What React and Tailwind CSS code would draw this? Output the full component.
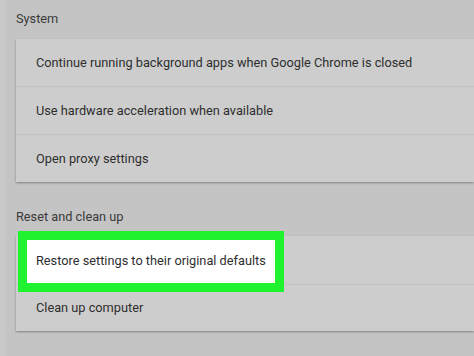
export default function App() {
  const font = { fontFamily: 'Roboto, "Noto Sans", sans-serif' };
  return (
    <div
      className="w-[474px] h-[356px] overflow-hidden bg-[#c4c4c4] text-[#2e2e2e] text-[12.75px] border-l-[5px] border-[#c9c9c9]"
      style={font}
    >
      <div className="pl-[11px]">
        <div className="h-[39px] flex items-center pb-[2px] text-[#3a3a3a]">System</div>
        <div className="bg-[#cdcdcd] shadow-[0_1px_2px_rgba(0,0,0,0.35)]">
          <div className="h-[47px] flex items-center pl-5">
            Continue running background apps when Google Chrome is closed
          </div>
          <div className="h-[48px] flex items-center pl-5 border-t border-[#c2c2c2]">
            Use hardware acceleration when available
          </div>
          <div className="h-[48px] flex items-center pl-5 border-t border-[#c2c2c2]">
            Open proxy settings
          </div>
        </div>
        <div className="h-[54px] flex items-end pb-[10px] text-[#3a3a3a]">Reset and clean up</div>
        <div className="bg-[#cdcdcd] shadow-[0_1px_2px_rgba(0,0,0,0.35)]">
          <div className="relative h-[48px] flex items-center pl-5">
            <div className="absolute left-[2px] top-[-5px] w-[266px] h-[61px] border-[9px] border-[#1ff22f] bg-white"></div>
            <span className="relative pt-[2px]">Restore settings to their original defaults</span>
          </div>
          <div className="h-[47px] flex items-center pl-5 border-t border-[#c2c2c2]">
            Clean up computer
          </div>
        </div>
      </div>
    </div>
  );
}
